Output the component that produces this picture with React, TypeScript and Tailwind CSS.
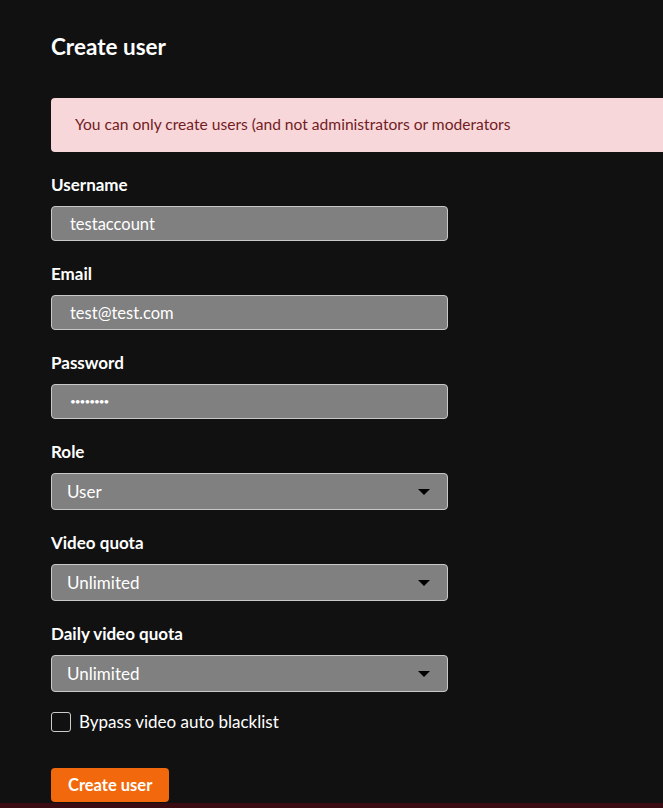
const font = { fontFamily: "Lato, 'Liberation Sans', sans-serif" };

const Field = ({ label, children }: { label: string; children: React.ReactNode }) => (
  <div className="flex flex-col">
    <label className="text-[17px] font-bold text-white leading-[20px] mb-[11px]">{label}</label>
    {children}
  </div>
);

const TextInput = ({ value }: { value: string }) => (
  <input
    readOnly
    type="text"
    value={value}
    className="w-[397px] h-[35px] rounded-[4px] border border-[#c8c8c8] bg-[#808080] px-[18px] text-[16.5px] text-white outline-none"
  />
);

const Select = ({ value }: { value: string }) => (
  <div className="relative flex w-[397px] h-[37px] items-center rounded-[4px] border border-[#c8c8c8] bg-[#808080] pl-[15px] text-[17px] text-white">
    {value}
    <span className="absolute right-[17px] top-[15px] h-0 w-0 border-x-[6px] border-t-[6px] border-x-transparent border-t-black" />
  </div>
);

export default function App() {
  return (
    <div className="min-h-[808px] bg-[#111111] flex flex-col" style={font}>
      <div className="flex-1 pl-[51px] pt-[33px]">
        <h1 className="text-[22.5px] font-bold text-white leading-[28px]">Create user</h1>

        <div className="mt-[37px] flex h-[54px] items-center rounded-l-[4px] bg-[#f8d7da] pl-[24px] text-[15.6px] text-[#721c24]">
          You can only create users (and not administrators or moderators
        </div>

        <div className="mt-[23px] flex flex-col gap-[23px]">
          <Field label="Username">
            <TextInput value="testaccount" />
          </Field>
          <Field label="Email">
            <TextInput value="test@test.com" />
          </Field>
          <Field label="Password">
            <div className="flex w-[397px] h-[35px] items-center rounded-[4px] border border-[#c8c8c8] bg-[#808080] px-[18px] text-[10px] tracking-[-1px] text-white">
              ••••••••
            </div>
          </Field>
          <Field label="Role">
            <Select value="User" />
          </Field>
          <Field label="Video quota">
            <Select value="Unlimited" />
          </Field>
          <Field label="Daily video quota">
            <Select value="Unlimited" />
          </Field>
        </div>

        <label className="mt-[20px] flex items-center gap-[8px] text-[17px] leading-[20px] text-white">
          <span className="h-[20px] w-[20px] rounded-[3px] border border-[#cccccc]" />
          Bypass video auto blacklist
        </label>

        <button className="mt-[36px] h-[34px] rounded-[4px] bg-[#f2690d] px-[17px] text-[16.5px] font-bold text-white">
          Create user
        </button>
      </div>
      <div className="h-[5px] bg-[#3a0b12]" />
    </div>
  );
}
